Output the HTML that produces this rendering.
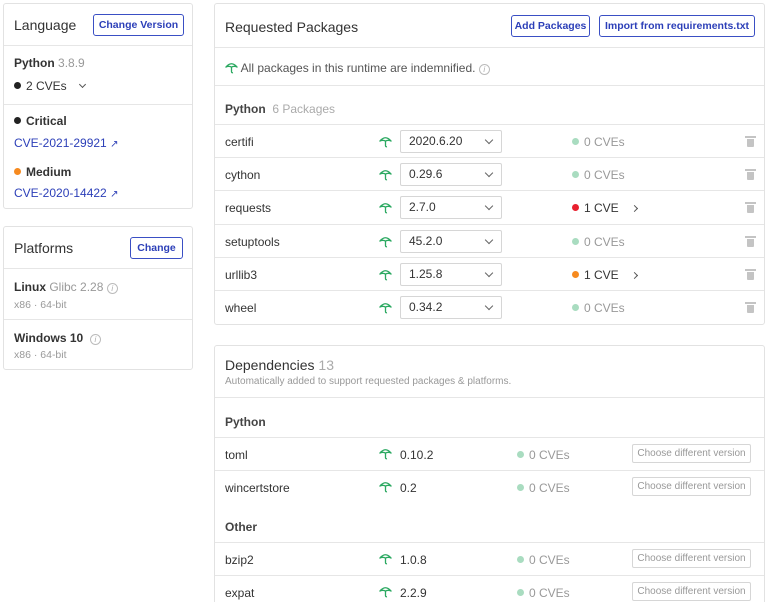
<!DOCTYPE html><html><head><style>
*{box-sizing:border-box;margin:0;padding:0}
html,body{width:768px;height:602px;overflow:hidden}
body{background:#fff;font-family:"Liberation Sans",sans-serif;font-size:12px;color:#333;position:relative}
.p{position:absolute;border:1px solid #e2e2e2;border-radius:3px;background:#fff}
.a{position:absolute;white-space:nowrap}
.hl{position:absolute;left:0;right:0;height:1px;background:#e6e6e6}
.btn{position:absolute;border:1px solid #3a4fc4;border-radius:3px;color:#2c3fb8;font-size:10.5px;font-weight:bold;display:flex;align-items:center;justify-content:center;height:22px;white-space:nowrap}
.t{font-size:14px;color:#333}
.g{color:#999}
.dot{display:inline-block;width:7px;height:7px;border-radius:50%;margin-right:5px;vertical-align:1px}
.sel{position:absolute;left:185px;width:102px;height:23px;border:1px solid #d6d6d6;border-radius:2px;padding-left:8px;line-height:21px}
.sel:after{content:"";position:absolute;right:9px;top:6px;width:5px;height:5px;border-right:1px solid #666;border-bottom:1px solid #666;transform:rotate(45deg)}
.cdv{position:absolute;left:417px;width:119px;height:19px;border:1px solid #d6d6d6;border-radius:2px;color:#999;font-size:10px;display:flex;align-items:center;justify-content:center;white-space:nowrap}
.lnk{color:#2c3fb8}
.info{display:inline-block;width:11px;height:11px;border:1px solid #bbb;border-radius:50%;font-size:8px;color:#aaa;text-align:center;line-height:9px;vertical-align:0;font-style:italic}
.tr{position:absolute;left:531px;top:11px;width:9px;height:11px}
.tr:before{content:"";position:absolute;left:-1px;top:0;width:11px;height:2px;background:#c4c4c4}
.tr:after{content:"";position:absolute;left:1px;top:3px;width:7px;height:8px;background:#c4c4c4;border-radius:0 0 1px 1px}
.ch{display:inline-block;width:5px;height:5px;border-right:1.3px solid #555;border-bottom:1.3px solid #555;transform:rotate(-45deg);margin-left:10px;vertical-align:1px}
.cd{display:inline-block;width:5px;height:5px;border-right:1.3px solid #555;border-bottom:1.3px solid #555;transform:rotate(45deg);margin-left:10px;vertical-align:3px}
</style></head><body>
<svg width="0" height="0" style="position:absolute"><defs><symbol id="u" viewBox="0 0 14 14"><path d="M1 6.5 Q7 -0.5 13 6.5 Q10 5 7 6.5 Q4 5 1 6.5 Z" fill="none" stroke="#2aa860" stroke-width="1.4" stroke-linejoin="round"/><path d="M7 6.5 V11.5 Q7 13 8.6 12.5" fill="none" stroke="#2aa860" stroke-width="1.4"/></symbol></defs></svg>

<div class="p" style="left:3px;top:3px;width:190px;height:206px">
<div class="a t" style="left:10px;top:13px">Language</div>
<div class="btn" style="left:89px;top:10px;width:91px">Change Version</div>
<div class="hl" style="top:41px"></div>
<div class="a" style="left:10px;top:52px"><b>Python</b> <span class="g">3.8.9</span></div>
<div class="a" style="left:10px;top:75px"><span class="dot" style="background:#222"></span>2 CVEs <span class="cd"></span></div>
<div class="hl" style="top:100px"></div>
<div class="a" style="left:10px;top:110px"><span class="dot" style="background:#222"></span><b>Critical</b></div>
<div class="a lnk" style="left:10px;top:132px">CVE-2021-29921 <span style="font-size:10px">&#8599;</span></div>
<div class="a" style="left:10px;top:161px"><span class="dot" style="background:#f68a1f"></span><b>Medium</b></div>
<div class="a lnk" style="left:10px;top:182px">CVE-2020-14422 <span style="font-size:10px">&#8599;</span></div>
</div>

<div class="p" style="left:3px;top:226px;width:190px;height:144px">
<div class="a t" style="left:10px;top:13px">Platforms</div>
<div class="btn" style="left:126px;top:10px;width:53px">Change</div>
<div class="hl" style="top:41px"></div>
<div class="a" style="left:10px;top:53px"><b>Linux</b> <span class="g">Glibc 2.28</span> <span class="info">i</span></div>
<div class="a g" style="left:10px;top:72px;font-size:10.5px">x86 · 64-bit</div>
<div class="hl" style="top:92px"></div>
<div class="a" style="left:10px;top:104px"><b>Windows 10</b> &nbsp;<span class="info">i</span></div>
<div class="a g" style="left:10px;top:122px;font-size:10.5px">x86 · 64-bit</div>
</div>

<div class="p" style="left:214px;top:3px;width:551px;height:322px">
<div class="a t" style="left:10px;top:15px">Requested Packages</div>
<div class="btn" style="left:296px;top:11px;width:79px">Add Packages</div>
<div class="btn" style="left:384px;top:11px;width:156px">Import from requirements.txt</div>
<div class="hl" style="top:43px"></div>
<div class="a" style="left:10px;top:57px;color:#555"><svg width="13" height="13" style="vertical-align:-2px"><use href="#u"/></svg> All packages in this runtime are indemnified. <span class="info">i</span></div>
<div class="hl" style="top:81px"></div>
<div class="a" style="left:10px;top:98px"><b style="color:#444">Python</b> <span style="color:#aaa">&nbsp;6 Packages</span></div>
<div class="hl" style="top:120px"></div>
<div style="position:absolute;left:0;right:0;top:121px">
<div style="position:absolute;left:0;right:0;top:0;height:33px;border-bottom:1px solid #e6e6e6"><span class="a" style="left:10px;top:10px">certifi</span><svg class="a" style="left:164px;top:10px" width="13" height="13"><use href="#u"/></svg><div class="sel" style="top:5px">2020.6.20</div><span class="a g" style="left:357px;top:10px"><span class="dot" style="background:#a9dcc0"></span>0 CVEs</span><span class="tr"></span></div>
<div style="position:absolute;left:0;right:0;top:33px;height:33px;border-bottom:1px solid #e6e6e6"><span class="a" style="left:10px;top:10px">cython</span><svg class="a" style="left:164px;top:10px" width="13" height="13"><use href="#u"/></svg><div class="sel" style="top:5px">0.29.6</div><span class="a g" style="left:357px;top:10px"><span class="dot" style="background:#a9dcc0"></span>0 CVEs</span><span class="tr"></span></div>
<div style="position:absolute;left:0;right:0;top:66px;height:34px;border-bottom:1px solid #e6e6e6"><span class="a" style="left:10px;top:10px">requests</span><svg class="a" style="left:164px;top:10px" width="13" height="13"><use href="#u"/></svg><div class="sel" style="top:5px">2.7.0</div><span class="a" style="left:357px;top:10px"><span class="dot" style="background:#e8202e"></span>1 CVE <span class="ch"></span></span><span class="tr"></span></div>
<div style="position:absolute;left:0;right:0;top:100px;height:33px;border-bottom:1px solid #e6e6e6"><span class="a" style="left:10px;top:10px">setuptools</span><svg class="a" style="left:164px;top:10px" width="13" height="13"><use href="#u"/></svg><div class="sel" style="top:5px">45.2.0</div><span class="a g" style="left:357px;top:10px"><span class="dot" style="background:#a9dcc0"></span>0 CVEs</span><span class="tr"></span></div>
<div style="position:absolute;left:0;right:0;top:133px;height:33px;border-bottom:1px solid #e6e6e6"><span class="a" style="left:10px;top:10px">urllib3</span><svg class="a" style="left:164px;top:10px" width="13" height="13"><use href="#u"/></svg><div class="sel" style="top:5px">1.25.8</div><span class="a" style="left:357px;top:10px"><span class="dot" style="background:#f68a1f"></span>1 CVE <span class="ch"></span></span><span class="tr"></span></div>
<div style="position:absolute;left:0;right:0;top:166px;height:33px"><span class="a" style="left:10px;top:10px">wheel</span><svg class="a" style="left:164px;top:10px" width="13" height="13"><use href="#u"/></svg><div class="sel" style="top:5px">0.34.2</div><span class="a g" style="left:357px;top:10px"><span class="dot" style="background:#a9dcc0"></span>0 CVEs</span><span class="tr"></span></div>
</div>
</div>

<div class="p" style="left:214px;top:345px;width:551px;height:270px">
<div class="a t" style="left:10px;top:11px">Dependencies <span style="color:#aaa">13</span></div>
<div class="a" style="left:10px;top:30px;font-size:10px;color:#999">Automatically added to support requested packages &amp; platforms.</div>
<div class="hl" style="top:51px"></div>
<div class="a" style="left:10px;top:69px"><b style="color:#444">Python</b></div>
<div class="hl" style="top:91px"></div>
<div class="a" style="left:10px;top:102px">toml</div><svg class="a" style="left:164px;top:101px" width="13" height="13"><use href="#u"/></svg><span class="a" style="left:185px;top:102px">0.10.2</span><span class="a g" style="left:302px;top:102px"><span class="dot" style="background:#a9dcc0"></span>0 CVEs</span><div class="cdv" style="top:98px">Choose different version</div>
<div class="hl" style="top:124px"></div>
<div class="a" style="left:10px;top:135px">wincertstore</div><svg class="a" style="left:164px;top:134px" width="13" height="13"><use href="#u"/></svg><span class="a" style="left:185px;top:135px">0.2</span><span class="a g" style="left:302px;top:135px"><span class="dot" style="background:#a9dcc0"></span>0 CVEs</span><div class="cdv" style="top:131px">Choose different version</div>
<div class="a" style="left:10px;top:174px"><b style="color:#444">Other</b></div>
<div class="hl" style="top:196px"></div>
<div class="a" style="left:10px;top:207px">bzip2</div><svg class="a" style="left:164px;top:206px" width="13" height="13"><use href="#u"/></svg><span class="a" style="left:185px;top:207px">1.0.8</span><span class="a g" style="left:302px;top:207px"><span class="dot" style="background:#a9dcc0"></span>0 CVEs</span><div class="cdv" style="top:203px">Choose different version</div>
<div class="hl" style="top:229px"></div>
<div class="a" style="left:10px;top:240px">expat</div><svg class="a" style="left:164px;top:239px" width="13" height="13"><use href="#u"/></svg><span class="a" style="left:185px;top:240px">2.2.9</span><span class="a g" style="left:302px;top:240px"><span class="dot" style="background:#a9dcc0"></span>0 CVEs</span><div class="cdv" style="top:236px">Choose different version</div>
</div>
</body></html>
